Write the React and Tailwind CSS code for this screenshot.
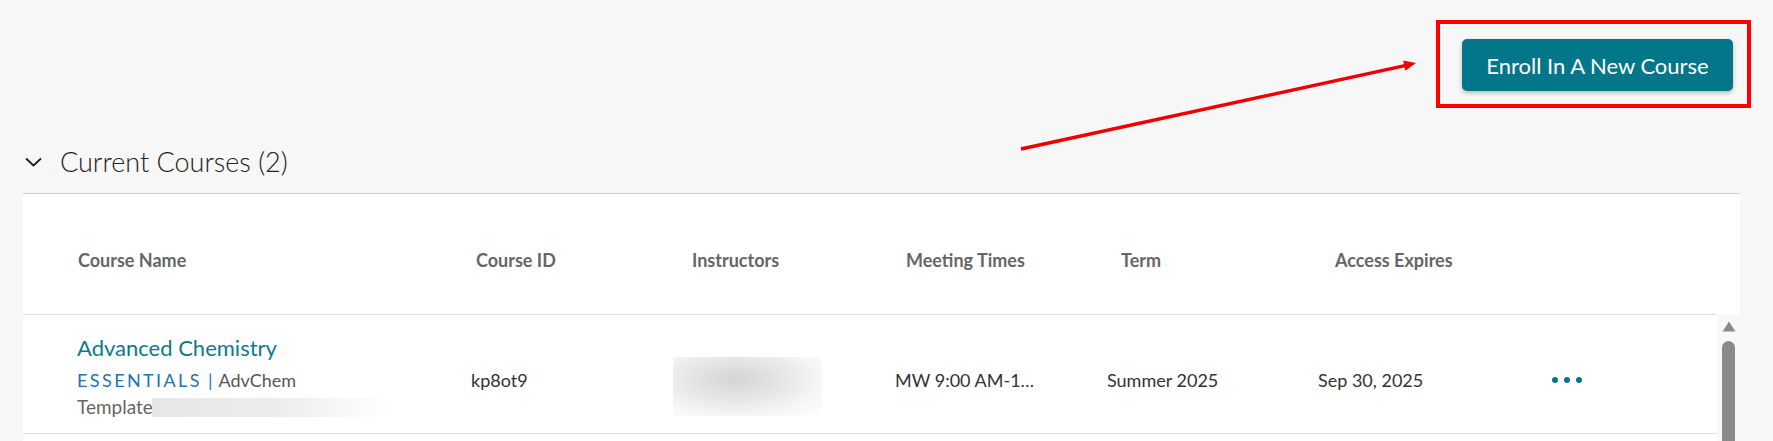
const columns = "grid grid-cols-[394px_202px_222px_212px_211px_234px_1fr]";

const headers = [
  { label: "Course Name", pad: "pl-[1px]" },
  { label: "Course ID", pad: "pl-[5px]" },
  { label: "Instructors", pad: "pl-[19px]" },
  { label: "Meeting Times", pad: "pl-[11px]" },
  { label: "Term", pad: "pl-[14px]" },
  { label: "Access Expires", pad: "pl-[17px]" },
  { label: "", pad: "" },
];

const courses = [
  {
    name: "Advanced Chemistry",
    code: "AdvChem",
    id: "kp8ot9",
    meets: "MW 9:00 AM-1…",
    term: "Summer 2025",
    expires: "Sep 30, 2025",
  },
];

function Chevron() {
  return (
    <svg width="17" height="10" viewBox="0 0 17 10" fill="none">
      <polyline points="1,1.5 8.5,8.5 16,1.5" stroke="#1f1f1f" strokeWidth="1.8" />
    </svg>
  );
}

function Redacted({ className }) {
  return <div className={className} />;
}

function CourseRow({ c }) {
  return (
    <div className={`${columns} pl-[54px] pt-[19px] pb-[14px] border-b border-[#dcdcdc]`}>
      <div className="flex flex-col">
        <a className="text-[22px] leading-[28px] text-[#0b7a8c]">{c.name}</a>
        <div className="mt-[6px] text-[18px] leading-[24px] flex items-center">
          <span className="text-[#2172b6] tracking-[2.4px]">ESSENTIALS</span>
          <span className="text-[#2172b6] mx-[6px]">|</span>
          <span className="text-[#555]">{c.code}</span>
        </div>
        <div className="mt-[3px] text-[19px] leading-[24px] text-[#666] flex items-center">
          <span>Template:</span>
          <Redacted className="-ml-[6px] w-[238px] h-[19px] bg-gradient-to-r from-[#e6e6e6] via-[#ececec] to-white" />
        </div>
      </div>
      <div className="flex items-center pt-[7px] text-[18px] text-[#333]">{c.id}</div>
      <div className="flex items-start pt-[23px]">
        <Redacted className="w-[149px] h-[59px] bg-[radial-gradient(ellipse_at_42%_38%,#d4d4d4,#e9e9e9_45%,#f6f6f6_70%,#ffffff)]" />
      </div>
      <div className="flex items-center pt-[7px] text-[18px] text-[#333] whitespace-nowrap">{c.meets}</div>
      <div className="flex items-center pt-[7px] text-[18px] text-[#333]">{c.term}</div>
      <div className="flex items-center pt-[7px] text-[18px] text-[#333]">{c.expires}</div>
      <div className="flex items-center pt-[7px] gap-[6px]">
        <span className="w-[6px] h-[6px] rounded-full bg-[#0b7388]" />
        <span className="w-[6px] h-[6px] rounded-full bg-[#0b7388]" />
        <span className="w-[6px] h-[6px] rounded-full bg-[#0b7388]" />
      </div>
    </div>
  );
}

export default function App() {
  return (
    <div className="relative w-full h-[441px] overflow-hidden bg-[#f7f7f7] font-['Lato',sans-serif]">
      <div className="flex justify-end pt-[39px] pr-[40px]">
        <button className="w-[271px] h-[52px] rounded-[5px] bg-[#03768a] text-white text-[22px] shadow-[0_2px_4px_rgba(0,0,0,0.25)]">
          Enroll In A New Course
        </button>
      </div>

      <div className="mt-[54px] flex items-center pl-[25px] h-[34px]">
        <Chevron />
        <h2 className="ml-[18px] text-[27px] leading-[34px] font-light text-[#222]">Current Courses (2)</h2>
      </div>

      <div className="mt-[14px] ml-[23px] mr-[33px] bg-white border-t border-[#cfcfcf]">
        <div className="flex">
          <div className={`${columns} flex-1 h-[121px] pl-[54px] pt-[55px] border-b border-[#dcdcdc]`}>
            {headers.map((h, i) => (
              <div key={i} className={`${h.pad} text-[18px] leading-[22px] font-bold text-[#666]`}>
                {h.label}
              </div>
            ))}
          </div>
          <div className="w-[23px]" />
        </div>
        <div className="flex">
          <div className="flex-1 pb-[20px]">
            {courses.map((c) => (
              <CourseRow key={c.id} c={c} />
            ))}
          </div>
          <div className="w-[23px] bg-[#f8f8f8] flex flex-col items-center">
            <svg className="mt-[6px]" width="14" height="11" viewBox="0 0 14 11">
              <polygon points="7,0.5 13.5,10.5 0.5,10.5" fill="#8a8a8a" />
            </svg>
            <div className="mt-[9px] w-[13px] h-[200px] rounded-full bg-[#8a8a8a]" />
          </div>
        </div>
      </div>

      <div className="absolute left-[1436px] top-[20px] w-[315px] h-[88px] border-4 border-[#ff0000] pointer-events-none" />
      <svg className="absolute left-0 top-0 pointer-events-none" width="1773" height="441">
        <line x1="1021" y1="149" x2="1405" y2="65.6" stroke="#ee0000" strokeWidth="3.5" />
        <polygon points="1416,63 1405.4,70.8 1403.2,60.4" fill="#ee0000" />
      </svg>
    </div>
  );
}
